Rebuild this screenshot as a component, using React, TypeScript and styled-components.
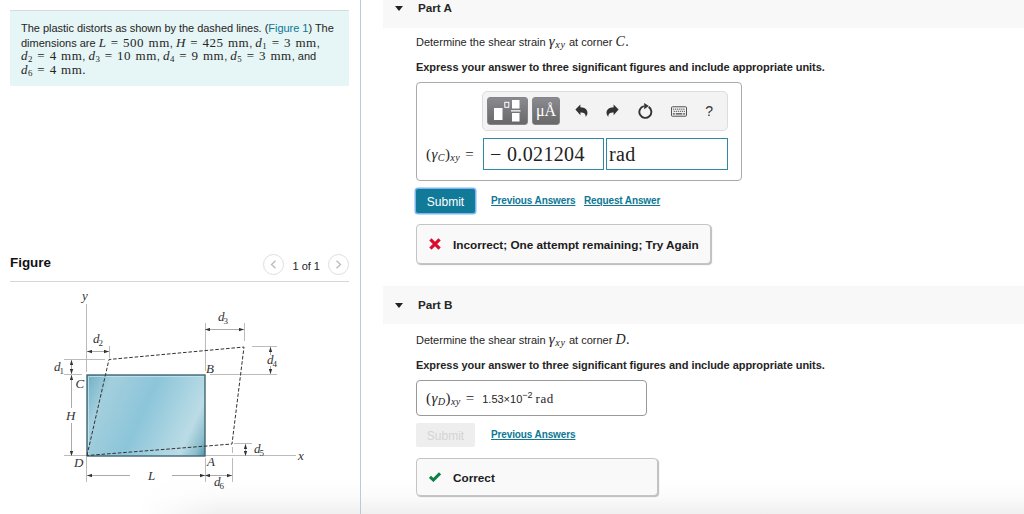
import React from "react";
import styled, {createGlobalStyle, css} from "styled-components";

const GlobalStyle = createGlobalStyle`
  * {
    box-sizing: border-box;
  }

  body {
    margin: 0;
    background: #fff;
    color: #252525;
    font-family: "Liberation Sans", Arial, sans-serif;
    overflow: hidden;
  }
`;

const Page = styled.div`
  display: flex;
  height: 514px;
  background: linear-gradient(to bottom, transparent 478px, rgba(0, 0, 0, 0.015) 496px, rgba(0, 0, 0, 0.06) 514px);
`;

const Sidebar = styled.aside`
  width: 361px;
  flex: none;
  display: flex;
  flex-direction: column;
  padding: 10px 11px 0 10px;
  border-right: 1px solid #b7cbe0;
  background: linear-gradient(to right, #fff 140px, transparent 220px);
`;

const Problem = styled.section`
  height: 76px;
  padding: 11px 0 0 11px;
  background: #e6f5f5;
  border-top: 1px solid #d5dcdc;
`;

const Line = styled.div<{ $spacing?: number }>`
  height: 13.6px;
  line-height: 13.6px;
  font-size: 11px;
  white-space: nowrap;
  letter-spacing: ${({$spacing}) => $spacing ?? 0}px;
`;

const TextLink = styled.a`
  color: #0d7795;
`;

const math = css`
  font-family: "Liberation Serif", "Times New Roman", serif;
`;

const Math = styled.span<{ $size?: number; $gap?: number }>`
  ${math};
  font-size: ${({$size}) => $size ?? 13}px;
  letter-spacing: ${({$gap}) => $gap ?? 0.5}px;
  word-spacing: 0.7px;
  line-height: 1;

  sub {
    font-size: 0.68em;
    line-height: 0;
    vertical-align: -0.2em;
  }
`;

const Operator = styled.span<{ $after?: number }>`
  margin: 0 ${({$after}) => $after ?? 7}px 0 5px;
  ${math};
  font-size: 15px;
`;

const FigureHeader = styled.header`
  margin-top: 161px;
  height: 35px;
  display: flex;
  align-items: center;
  justify-content: space-between;
  border-bottom: 1px solid #d6d6d6;
`;

const FigureTitle = styled.h2`
  margin: 0 0 4px;
  font-size: 13.4px;
  font-weight: bold;
  color: #111;
`;

const Pager = styled.div`
  display: flex;
  align-items: center;
  gap: 8px;
  font-size: 11px;
`;

const PageCount = styled.span`
  padding-top: 3px;
`;

const PagerButton = styled.button`
  width: 21px;
  height: 21px;
  padding: 0;
  display: grid;
  place-items: center;
  border: 1px solid #dedede;
  border-radius: 50%;
  background: #fff;
`;

const Drawing = styled.svg`
  display: block;
  margin-left: -10px;
  font-family: "Liberation Serif", serif;
  font-style: italic;
  font-size: 13px;
  fill: #333;
`;

const Content = styled.main`
  flex: 1;
  padding-left: 22px;
`;

const PartHeader = styled.header<{ $height: number; $top?: number }>`
  margin-top: ${({$top}) => $top ?? 0}px;
  height: ${({$height}) => $height}px;
  padding: 0 0 0 12px;
  display: flex;
  align-items: center;
  gap: 14px;
  background: #f8f8f8;
`;

const PartTitle = styled.h3<{ $shift?: number }>`
  margin: 0;
  padding: 0 0 ${({$shift}) => $shift ?? 1}px 1px;
  font-size: 11.7px;
  font-weight: bold;
`;

const Caret = styled.i<{ $shift?: number }>`
  margin-bottom: ${({$shift}) => $shift ?? 0}px;
  border: 4.5px solid transparent;
  border-top: 5px solid #222;
  border-bottom: 0;
`;

const PartBody = styled.div`
  padding-left: 33px;
`;

const Question = styled.p<{ $top: number }>`
  margin: ${({$top}) => $top}px 0 0;
  height: 18px;
  line-height: 18px;
  font-size: 11px;
  white-space: nowrap;
`;

const Instruction = styled.p<{ $top: number }>`
  margin: ${({$top}) => $top}px 0 0;
  height: 14px;
  line-height: 14px;
  font-size: 11px;
  font-weight: bold;
  letter-spacing: -0.04px;
  white-space: nowrap;
`;

const AnswerEditor = styled.div`
  margin-top: 8px;
  width: 326px;
  height: 99px;
  padding: 8px 13px 0 9px;
  border: 1px solid #aaa;
  border-radius: 4px;
  background: #fff;
`;

const Toolbar = styled.div`
  margin-left: 56px;
  width: 246px;
  height: 40px;
  padding: 0 14px 0 4px;
  display: flex;
  align-items: center;
  border: 1px solid #dcdcdc;
  border-radius: 5px;
  background: #f3f3f3;
`;

const ToolButton = styled.button<{ $width: number }>`
  width: ${({$width}) => $width}px;
  height: 28px;
  margin-right: 4px;
  padding: 0;
  display: grid;
  place-items: center;
  border: 1px solid #858588;
  border-radius: 3px;
  background: linear-gradient(#8a8a90, #68686a);
  color: #fff;
  ${math};
  font-size: 16px;
`;

const ToolIcons = styled.div`
  flex: 1;
  padding-left: 11px;
  display: flex;
  align-items: center;
  justify-content: space-between;
  color: #333;
  font-size: 14px;
`;

const InputRow = styled.div`
  margin-top: 7px;
  height: 32px;
  display: flex;
  align-items: center;
`;

const InputLabel = styled.div`
  width: 57px;
  flex: none;
  white-space: nowrap;
`;

const AnswerField = styled.div<{ $width: number; $left?: number }>`
  width: ${({$width}) => $width}px;
  flex: none;
  height: 32px;
  padding-left: ${({$left}) => $left ?? 2}px;
  margin-right: 2px;
  border: 1px solid #2e89a5;
  line-height: 30px;
  white-space: nowrap;
  color: #222;
  ${math};
  font-size: 20px;
  letter-spacing: 0.35px;
`;

const Actions = styled.div<{ $top: number }>`
  margin-top: ${({$top}) => $top}px;
  height: 24px;
  display: flex;
  align-items: center;
`;

const SubmitButton = styled.button<{ $off?: boolean }>`
  width: 59px;
  height: 24px;
  margin-right: 16px;
  padding: 1px 0 0;
  border: 0;
  border-radius: 2px;
  background: ${({$off}) => $off ? "#eee" : "#117a98"};
  color: ${({$off}) => $off ? "#d4d4d4" : "#fff"};
  box-shadow: ${({$off}) => $off ? "none" : "0 0 0 1.5px #7fb5f0"};
  font-family: inherit;
  font-size: 12px;
`;

const ActionLink = styled.a`
  margin: -1px 8.5px 0 0;
  color: #0d7795;
  font-size: 10px;
  font-weight: bold;
  letter-spacing: -0.12px;
  text-decoration: underline;
  white-space: nowrap;
`;

const Feedback = styled.div<{ $width: number; $height: number; $top: number }>`
  margin-top: ${({$top}) => $top}px;
  width: ${({$width}) => $width}px;
  height: ${({$height}) => $height}px;
  padding-left: 12px;
  display: flex;
  align-items: center;
  gap: 12px;
  border: 1px solid #c4c4c4;
  border-radius: 4px;
  background: #f9f9f9;
  box-shadow: 1px 1px 1px #bbb;
  font-size: 11.75px;
  font-weight: bold;
  white-space: nowrap;
  color: #1c1c1c;
`;

const FinalAnswer = styled.div`
  margin-top: 8px;
  width: 231px;
  height: 36px;
  padding-left: 9px;
  display: flex;
  align-items: center;
  border: 1px solid #999;
  border-radius: 4px;
  background: #fff;
  white-space: nowrap;
`;

const Value = styled.span`
  font-size: 11px;

  sup {
    font-size: 9px;
    line-height: 0;
  }
`;

const D = ({n}: { n: number }) => <Math><i>d</i><sub>{n}</sub></Math>;

const Gamma = ({of}: { of: string }) => (
    <Math $size={15} $gap={0.4}>(<i>γ</i><sub><i>{of}</i></sub>)<sub><i>xy</i></sub></Math>
);

const GammaXY = () => <Math $size={15} $gap={0.75}><i>γ</i><sub><i>xy</i></sub></Math>;

const Chevron = ({flip}: { flip?: boolean }) => (
    <svg width="7" height="9" viewBox="0 0 7 9" fill="none" stroke="#b9b9b9" strokeWidth="1.3">
        <path d={flip ? "M1.5 .7 5.5 4.5 1.5 8.3" : "M5.5 .7 1.5 4.5 5.5 8.3"}/>
    </svg>
);

const TemplateIcon = () => (
    <svg width="28" height="24" viewBox="0 0 28 24">
        <path fill="#fff" d="M0 9h8.5v12H0zM18 1h7.5v8.5H18zM18 14h7.5v8.5H18zM17 11.2h9.5v1.2H17z"/>
        <rect x="10.8" y="3.3" width="4" height="5" fill="none" stroke="#fff"/>
    </svg>
);

const UndoIcon = ({flip}: { flip?: boolean }) => (
    <svg width="13" height="14" viewBox="0 0 13 14" fill="#333">
        <path transform={flip ? "translate(13 0) scale(-1 1)" : undefined}
              d="M5.4 .6v2.6c4.7.1 7.5 2.6 7 6.3-.2 1.4-.9 2.5-1.8 3.3.3-2.9-1.4-4.3-5.2-4.3v2.7L.4 5.6z"/>
    </svg>
);

const ResetIcon = () => (
    <svg width="15" height="16" viewBox="0 0 15 16">
        <path d="M10.7 3.9A6 6 0 1 1 5.8 3.1" fill="none" stroke="#333" strokeWidth="1.9"/>
        <path d="M6.2 0 10.8 3.1 6.2 6.2z" fill="#333"/>
    </svg>
);

const KeyboardIcon = () => (
    <svg width="16" height="11" viewBox="0 0 17 11" fill="none" stroke="#444">
        <rect x=".5" y=".5" width="16" height="10" rx="1"/>
        <path d="M2 3h13M2.8 5.3h12" strokeDasharray="1.4 .8"/>
        <path d="M2 8h2m1 0h7m1 0h2" strokeWidth="1.4"/>
    </svg>
);

const CrossIcon = () => (
    <svg width="12" height="12" viewBox="0 0 12 12" stroke="#dc0a2d" strokeWidth="3.2">
        <path d="M1.4 1.4 10.6 10.6M10.6 1.4 1.4 10.6"/>
    </svg>
);

const CheckIcon = () => (
    <svg width="12" height="10" viewBox="0 0 12 10" fill="none" stroke="#0b8040" strokeWidth="3">
        <path d="M1 4.8 4.4 8 11 1.3"/>
    </svg>
);

const labels = [
    {x: 82, y: 300, text: "y"},
    {x: 93, y: 343, text: "d", sub: "2"},
    {x: 54, y: 371, text: "d", sub: "1"},
    {x: 218, y: 321, text: "d", sub: "3"},
    {x: 267, y: 364, text: "d", sub: "4"},
    {x: 254, y: 453, text: "d", sub: "5"},
    {x: 214, y: 486, text: "d", sub: "6"},
    {x: 75.5, y: 388, text: "C"},
    {x: 206, y: 372.5, text: "B"},
    {x: 66, y: 420, text: "H"},
    {x: 74, y: 467, text: "D"},
    {x: 207, y: 466, text: "A"},
    {x: 148, y: 480, text: "L"},
    {x: 298, y: 460, text: "x"},
];

const doubleArrows = [
    "M87 351.5H109",
    "M71.5 360V374",
    "M205 329.5H244",
    "M245.5 444V456",
    "M205 475.5H232",
];

const PlateFigure = () => (
    <Drawing width="350" height="230" viewBox="0 282 350 230">
        <defs>
            <linearGradient id="plate" gradientUnits="userSpaceOnUse" x1="80" y1="385" x2="212" y2="446">
                <stop offset="0" stopColor="#6aacc2"/>
                <stop offset="0.18" stopColor="#a3cfdd"/>
                <stop offset="0.47" stopColor="#8cc5d9"/>
                <stop offset="0.82" stopColor="#bbdce6"/>
                <stop offset="0.92" stopColor="#8dbdcd"/>
                <stop offset="1" stopColor="#4389a2"/>
            </linearGradient>
            <marker id="arrow" viewBox="0 0 6 4" refX="6" refY="2" markerWidth="5" markerHeight="4"
                    markerUnits="userSpaceOnUse" orient="auto-start-reverse">
                <path d="M0 0 6 2 0 4z" fill="#333"/>
            </marker>
        </defs>
        <g stroke="#bbb" fill="none">
            <path d="M86.5 304v68M86.5 457v25M109.5 346v12M64 359.5h41M64 374.5h18M64 455.5h22"/>
            <path d="M205.5 323v48M244.5 323v18M252 346.5h25M210 374.5h67M234 443.5h18M205 455.5h91"/>
            <path d="M205.5 458v24M232.5 447v6M232.5 458v24"/>
        </g>
        <rect x="87" y="375" width="118" height="81" fill="url(#plate)" stroke="#416776" strokeWidth="1.4"/>
        <path d="M88.5 455V376.5H204" fill="none" stroke="#c9e4ec" strokeWidth=".8"/>
        <path d="M87 455.5 109 359.5 244 347 232 444z" fill="none" stroke="#333" strokeDasharray="3.6 1.8"/>
        <g stroke="#aaa" fill="none">
            {doubleArrows.map(d => (
                <path key={d} d={d} markerStart="url(#arrow)" markerEnd="url(#arrow)"/>
            ))}
            <path d="M71.5 375V408" markerStart="url(#arrow)"/>
            <path d="M71.5 423V456" markerEnd="url(#arrow)"/>
            <path d="M270.5 347V355" markerStart="url(#arrow)"/>
            <path d="M270.5 366V374" markerEnd="url(#arrow)"/>
            <path d="M87 475.5H130" markerStart="url(#arrow)"/>
            <path d="M172 475.5H205" markerEnd="url(#arrow)"/>
        </g>
        {labels.map(({x, y, text, sub}) => (
            <text key={text + sub} x={x} y={y}>
                {text}{sub && <tspan fontSize="9" fontStyle="normal" dx="-1" dy="2.5">{sub}</tspan>}
            </text>
        ))}
    </Drawing>
);

export default function App() {
    return (
        <Page>
            <GlobalStyle/>
            <Sidebar>
                <Problem>
                    <Line $spacing={-0.03}>The plastic distorts as shown by the dashed lines. (<TextLink>Figure 1</TextLink>) The</Line>
                    <Line>dimensions are <Math><i>L</i> = 500 mm</Math>, <Math><i>H</i> = 425 mm</Math>, <D n={1}/><Math> = 3 mm</Math>,</Line>
                    <Line><D n={2}/><Math> = 4 mm</Math>, <D n={3}/><Math> = 10 mm</Math>, <D n={4}/><Math> = 9 mm</Math>, <D n={5}/><Math> = 3 mm</Math>, and</Line>
                    <Line><D n={6}/><Math> = 4 mm.</Math></Line>
                </Problem>
                <FigureHeader>
                    <FigureTitle>Figure</FigureTitle>
                    <Pager>
                        <PagerButton><Chevron/></PagerButton>
                        <PageCount>1 of 1</PageCount>
                        <PagerButton><Chevron flip/></PagerButton>
                    </Pager>
                </FigureHeader>
                <PlateFigure/>
            </Sidebar>
            <Content>
                <PartHeader $height={28}>
                    <Caret $shift={12}/>
                    <PartTitle $shift={13}>Part A</PartTitle>
                </PartHeader>
                <PartBody>
                    <Question $top={5}>Determine the shear strain <GammaXY/> at corner <Math $size={14}><i>C</i>.</Math></Question>
                    <Instruction $top={9}>Express your answer to three significant figures and include appropriate units.</Instruction>
                    <AnswerEditor>
                        <Toolbar>
                            <ToolButton $width={41}><TemplateIcon/></ToolButton>
                            <ToolButton $width={28}>μÅ</ToolButton>
                            <ToolIcons>
                                <UndoIcon/>
                                <UndoIcon flip/>
                                <ResetIcon/>
                                <KeyboardIcon/>
                                <span>?</span>
                            </ToolIcons>
                        </Toolbar>
                        <InputRow>
                            <InputLabel><Gamma of="C"/><Operator>=</Operator></InputLabel>
                            <AnswerField $width={121} $left={6}>− 0.021204</AnswerField>
                            <AnswerField $width={122}>rad</AnswerField>
                        </InputRow>
                    </AnswerEditor>
                    <Actions $top={8}>
                        <SubmitButton>Submit</SubmitButton>
                        <ActionLink>Previous Answers</ActionLink>
                        <ActionLink>Request Answer</ActionLink>
                    </Actions>
                    <Feedback $top={11} $width={295} $height={40}>
                        <CrossIcon/>
                        Incorrect; One attempt remaining; Try Again
                    </Feedback>
                </PartBody>
                <PartHeader $height={38} $top={22}>
                    <Caret/>
                    <PartTitle>Part B</PartTitle>
                </PartHeader>
                <PartBody>
                    <Question $top={7}>Determine the shear strain <GammaXY/> at corner <Math $size={14}><i>D</i>.</Math></Question>
                    <Instruction $top={9}>Express your answer to three significant figures and include appropriate units.</Instruction>
                    <FinalAnswer>
                        <Gamma of="D"/><Operator $after={8}>=</Operator>
                        <Value>1.53×10<sup>−2</sup> <Math $gap={0.5}>rad</Math></Value>
                    </FinalAnswer>
                    <Actions $top={7}>
                        <SubmitButton $off>Submit</SubmitButton>
                        <ActionLink>Previous Answers</ActionLink>
                    </Actions>
                    <Feedback $top={11} $width={242} $height={38}>
                        <CheckIcon/>
                        Correct
                    </Feedback>
                </PartBody>
            </Content>
        </Page>
    );
}
